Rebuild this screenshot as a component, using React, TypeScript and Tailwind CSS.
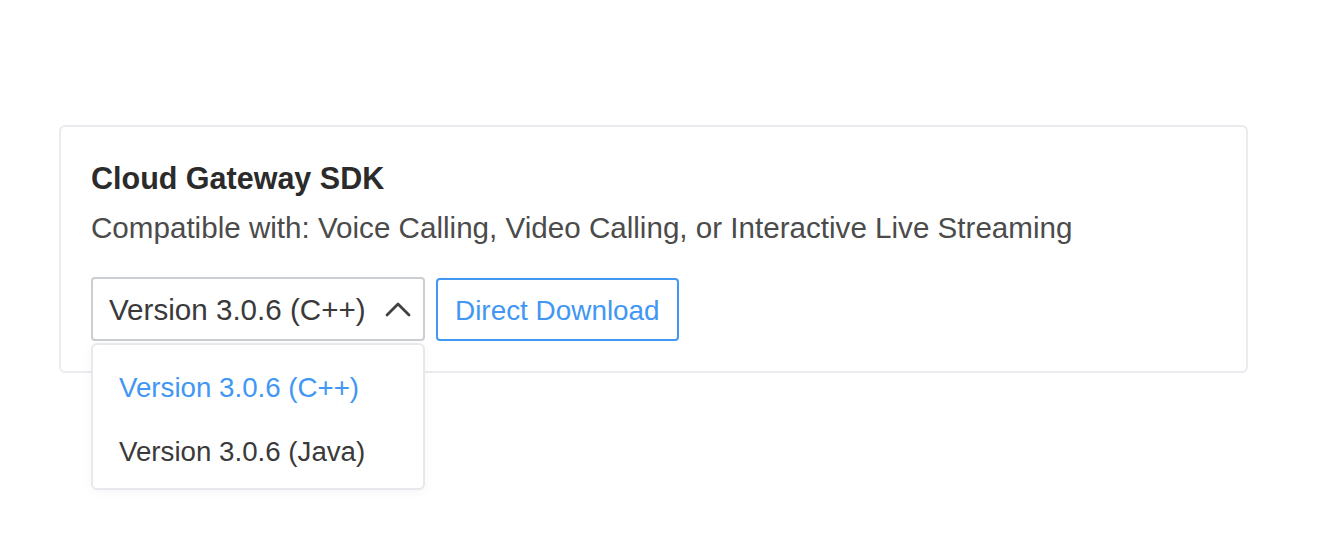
const versions = ["Version 3.0.6 (C++)", "Version 3.0.6 (Java)"];

export default function App() {
  const selected = versions[0];
  return (
    <div className="min-h-[542px] w-[1338px] bg-white pt-[125px] pl-[59px] font-['Liberation_Sans',sans-serif]">
      <div className="w-[1189px] rounded-md border-2 border-[#e9ebef] px-[30px] pt-[32px] pb-[30px]">
        <h3 className="text-[30.5px] font-bold leading-[38px] text-[#2b2b2b]">Cloud Gateway SDK</h3>
        <p className="mt-[13px] text-[29.6px] leading-[36px] text-[#4b4b4b]">
          Compatible with: Voice Calling, Video Calling, or Interactive Live Streaming
        </p>
        <div className="mt-[31px] flex items-center gap-[11px]">
          <div className="relative">
            <button className="flex h-[64px] w-[334px] items-center justify-between rounded-[4px] border-2 border-[#cacdd2] pt-[3px] pl-[16px] pr-[12px] text-[29.6px] text-[#3a3a3a]">
              <span>{selected}</span>
              <svg width="26" height="15" viewBox="0 0 26 15" fill="none" className="-mt-[3px] text-[#404040]">
                <polyline points="2,13 13,2 24,13" stroke="currentColor" strokeWidth="2.8" strokeLinecap="round" strokeLinejoin="round" />
              </svg>
            </button>
            <div className="absolute left-0 top-[66px] w-[334px] rounded-md border-2 border-[#e6e8ec] bg-white pt-[11px] pb-[4px] shadow-[0_2px_12px_rgba(0,0,0,0.04)]">
              {versions.map((v) => (
                <div
                  key={v}
                  className={`flex h-[64px] items-center pl-[26px] text-[27.7px] ${
                    v === selected ? "text-[#4197f3]" : "text-[#3a3a3a]"
                  }`}
                >
                  {v}
                </div>
              ))}
            </div>
          </div>
          <button className="h-[63px] rounded-[4px] border-2 border-[#4197f3] px-[17px] pt-[3px] text-[27.9px] text-[#4197f3]">
            Direct Download
          </button>
        </div>
      </div>
    </div>
  );
}
